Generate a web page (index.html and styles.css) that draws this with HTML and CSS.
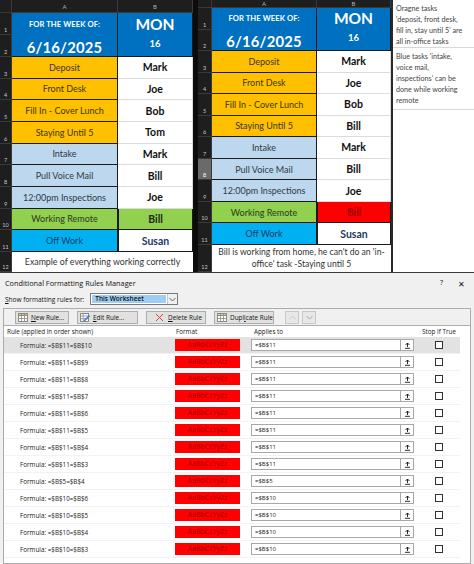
FILE: index.html
```
<!DOCTYPE html>
<html>
<head>
<meta charset="utf-8">
<link rel="stylesheet" href="styles.css">
</head>
<body>
<div class="top">
  <div class="sheet s1">
    <div class="ch corner"></div><div class="ch">A</div><div class="ch">B</div>
    <div class="rn">1</div>
    <div class="blueA"><div class="week">FOR THE WEEK OF:</div><div class="date">6/16/2025</div></div>
    <div class="blueB"><div class="mon">MON</div><div class="day">16</div></div>
    <div class="rn">2</div>
    <div class="rn">3</div><div class="c or">Deposit</div><div class="n">Mark</div>
    <div class="rn">4</div><div class="c or">Front Desk</div><div class="n">Joe</div>
    <div class="rn">5</div><div class="c or">Fill In - Cover Lunch</div><div class="n">Bob</div>
    <div class="rn">6</div><div class="c or">Staying Until 5</div><div class="n">Tom</div>
    <div class="rn">7</div><div class="c lb">Intake</div><div class="n">Mark</div>
    <div class="rn">8</div><div class="c lb">Pull Voice Mail</div><div class="n">Bill</div>
    <div class="rn">9</div><div class="c lb">12:00pm Inspections</div><div class="n">Joe</div>
    <div class="rn">10</div><div class="c gr">Working Remote</div><div class="n box gr">Bill</div>
    <div class="rn">11</div><div class="c cy">Off Work</div><div class="n box cy navy">Susan</div>
    <div class="rn">12</div><div class="foot">Example of everything working correctly</div>
  </div>
  <div class="gap"></div>
  <div class="sheet s2">
    <div class="ch corner"></div><div class="ch">A</div><div class="ch">B</div>
    <div class="rn">1</div>
    <div class="blueA"><div class="week">FOR THE WEEK OF:</div><div class="date">6/16/2025</div></div>
    <div class="blueB"><div class="mon">MON</div><div class="day">16</div></div>
    <div class="rn">2</div>
    <div class="rn">3</div><div class="c or">Deposit</div><div class="n">Mark</div>
    <div class="rn">4</div><div class="c or">Front Desk</div><div class="n">Joe</div>
    <div class="rn">5</div><div class="c or">Fill In - Cover Lunch</div><div class="n">Bob</div>
    <div class="rn">6</div><div class="c or">Staying Until 5</div><div class="n">Bill</div>
    <div class="rn">7</div><div class="c lb">Intake</div><div class="n">Mark</div>
    <div class="rn sel">8</div><div class="c lb">Pull Voice Mail</div><div class="n">Bill</div>
    <div class="rn">9</div><div class="c lb">12:00pm Inspections</div><div class="n">Joe</div>
    <div class="rn">10</div><div class="c gr">Working Remote</div><div class="n box rd">Bill</div>
    <div class="rn">11</div><div class="c cy">Off Work</div><div class="n box cy navy">Susan</div>
    <div class="rn">12</div><div class="foot two">Bill is working from home, he can't do an 'in-office' task -Staying until 5</div>
  </div>
  <div class="notes">
    <div class="note n1">Oragne tasks<br>'deposit, front desk,<br>fill in, stay until 5' are<br>all in-office tasks</div>
    <div class="note n2">Blue tasks 'intake,<br>voice mail,<br>inspections' can be<br>done while working<br>remote</div>
  </div>
</div>

<div class="dialog">
  <div class="titlebar">
    <span>Conditional Formatting Rules Manager</span>
    <span class="ctrls"><span class="q">?</span><span class="x">✕</span></span>
  </div>
  <div class="showrow">
    <span><u>S</u>how formatting rules for:</span>
    <div class="combo"><span class="combosel">This Worksheet</span><span class="comboarr"><svg width="7" height="5" viewBox="0 0 7 5"><path d="M0.5 1 L3.5 4 L6.5 1" fill="none" stroke="#555" stroke-width="0.9"/></svg></span></div>
  </div>
  <div class="toolbar">
    <div class="btn b1">
      <svg width="10" height="9" viewBox="0 0 10 9"><rect x="0.5" y="0.5" width="9" height="8" fill="#fff" stroke="#8a8a8a"/><rect x="0.5" y="0.5" width="9" height="2" fill="#f2b84b" stroke="#8a8a8a"/><path d="M3.5 0.5V8.5M6.5 0.5V8.5M0.5 5.5H9.5" stroke="#8a8a8a" stroke-width="0.8"/></svg>
      <span><u>N</u>ew Rule...</span>
    </div>
    <div class="btn b2">
      <svg width="10" height="9" viewBox="0 0 10 9"><rect x="0.5" y="0.5" width="8" height="8" fill="#fff" stroke="#8a8a8a"/><path d="M0.5 3H8.5M0.5 5.7H8.5M3.2 0.5V8.5" stroke="#8a8a8a" stroke-width="0.8"/><path d="M4 8 L9.5 2.5" stroke="#3b7dd8" stroke-width="1.6"/></svg>
      <span><u>E</u>dit Rule...</span>
    </div>
    <div class="btn b3">
      <svg width="9" height="9" viewBox="0 0 9 9"><path d="M1 1L8 8M8 1L1 8" stroke="#e0393e" stroke-width="1"/></svg>
      <span><u>D</u>elete Rule</span>
    </div>
    <div class="btn b4">
      <svg width="10" height="9" viewBox="0 0 10 9"><rect x="0.5" y="0.5" width="9" height="8" fill="#fff" stroke="#8a8a8a"/><rect x="0.5" y="0.5" width="9" height="2" fill="#f2c97a" stroke="#8a8a8a"/><path d="M3.5 0.5V8.5M6.5 0.5V8.5M0.5 5.5H9.5" stroke="#8a8a8a" stroke-width="0.8"/></svg>
      <span>Dupl<u>i</u>cate Rule</span>
    </div>
    <div class="arrows">
      <div class="abtn"><svg width="7" height="5" viewBox="0 0 7 5"><path d="M0.5 4 L3.5 1 L6.5 4" fill="none" stroke="#c8c8c8" stroke-width="0.9"/></svg></div>
      <div class="abtn"><svg width="7" height="5" viewBox="0 0 7 5"><path d="M0.5 1 L3.5 4 L6.5 1" fill="none" stroke="#8aa0c0" stroke-width="0.9"/></svg></div>
    </div>
  </div>
  <div class="list">
    <div class="lrow lhead">
      <div class="rule">Rule (applied in order shown)</div>
      <div class="fmt">Format</div>
      <div class="sp"></div>
      <div class="app">Applies to</div>
      <div class="stop">Stop If True</div>
    </div>
    <div class="lrow selrow"><div class="rule">Formula: =$B$11=$B$10</div><div class="fmtbox">AaBbCcYyZz</div><div class="sp"></div><div class="inp">=$B$11</div><div class="ib"><svg width="7" height="7" viewBox="0 0 7 7"><path d="M3.5 1V5M1.5 3L3.5 1L5.5 3M1 6.3H6" fill="none" stroke="#111" stroke-width="0.9"/></svg></div><div class="stopc"><span class="chk"></span></div></div>
    <div class="lrow"><div class="rule">Formula: =$B$11=$B$9</div><div class="fmtbox">AaBbCcYyZz</div><div class="sp"></div><div class="inp">=$B$11</div><div class="ib"><svg width="7" height="7" viewBox="0 0 7 7"><path d="M3.5 1V5M1.5 3L3.5 1L5.5 3M1 6.3H6" fill="none" stroke="#111" stroke-width="0.9"/></svg></div><div class="stopc"><span class="chk"></span></div></div>
    <div class="lrow"><div class="rule">Formula: =$B$11=$B$8</div><div class="fmtbox">AaBbCcYyZz</div><div class="sp"></div><div class="inp">=$B$11</div><div class="ib"><svg width="7" height="7" viewBox="0 0 7 7"><path d="M3.5 1V5M1.5 3L3.5 1L5.5 3M1 6.3H6" fill="none" stroke="#111" stroke-width="0.9"/></svg></div><div class="stopc"><span class="chk"></span></div></div>
    <div class="lrow"><div class="rule">Formula: =$B$11=$B$7</div><div class="fmtbox">AaBbCcYyZz</div><div class="sp"></div><div class="inp">=$B$11</div><div class="ib"><svg width="7" height="7" viewBox="0 0 7 7"><path d="M3.5 1V5M1.5 3L3.5 1L5.5 3M1 6.3H6" fill="none" stroke="#111" stroke-width="0.9"/></svg></div><div class="stopc"><span class="chk"></span></div></div>
    <div class="lrow"><div class="rule">Formula: =$B$11=$B$6</div><div class="fmtbox">AaBbCcYyZz</div><div class="sp"></div><div class="inp">=$B$11</div><div class="ib"><svg width="7" height="7" viewBox="0 0 7 7"><path d="M3.5 1V5M1.5 3L3.5 1L5.5 3M1 6.3H6" fill="none" stroke="#111" stroke-width="0.9"/></svg></div><div class="stopc"><span class="chk"></span></div></div>
    <div class="lrow"><div class="rule">Formula: =$B$11=$B$5</div><div class="fmtbox">AaBbCcYyZz</div><div class="sp"></div><div class="inp">=$B$11</div><div class="ib"><svg width="7" height="7" viewBox="0 0 7 7"><path d="M3.5 1V5M1.5 3L3.5 1L5.5 3M1 6.3H6" fill="none" stroke="#111" stroke-width="0.9"/></svg></div><div class="stopc"><span class="chk"></span></div></div>
    <div class="lrow"><div class="rule">Formula: =$B$11=$B$4</div><div class="fmtbox">AaBbCcYyZz</div><div class="sp"></div><div class="inp">=$B$11</div><div class="ib"><svg width="7" height="7" viewBox="0 0 7 7"><path d="M3.5 1V5M1.5 3L3.5 1L5.5 3M1 6.3H6" fill="none" stroke="#111" stroke-width="0.9"/></svg></div><div class="stopc"><span class="chk"></span></div></div>
    <div class="lrow"><div class="rule">Formula: =$B$11=$B$3</div><div class="fmtbox">AaBbCcYyZz</div><div class="sp"></div><div class="inp">=$B$11</div><div class="ib"><svg width="7" height="7" viewBox="0 0 7 7"><path d="M3.5 1V5M1.5 3L3.5 1L5.5 3M1 6.3H6" fill="none" stroke="#111" stroke-width="0.9"/></svg></div><div class="stopc"><span class="chk"></span></div></div>
    <div class="lrow"><div class="rule">Formula: =$B$5=$B$4</div><div class="fmtbox">AaBbCcYyZz</div><div class="sp"></div><div class="inp">=$B$5</div><div class="ib"><svg width="7" height="7" viewBox="0 0 7 7"><path d="M3.5 1V5M1.5 3L3.5 1L5.5 3M1 6.3H6" fill="none" stroke="#111" stroke-width="0.9"/></svg></div><div class="stopc"><span class="chk"></span></div></div>
    <div class="lrow"><div class="rule">Formula: =$B$10=$B$6</div><div class="fmtbox">AaBbCcYyZz</div><div class="sp"></div><div class="inp">=$B$10</div><div class="ib"><svg width="7" height="7" viewBox="0 0 7 7"><path d="M3.5 1V5M1.5 3L3.5 1L5.5 3M1 6.3H6" fill="none" stroke="#111" stroke-width="0.9"/></svg></div><div class="stopc"><span class="chk"></span></div></div>
    <div class="lrow"><div class="rule">Formula: =$B$10=$B$5</div><div class="fmtbox">AaBbCcYyZz</div><div class="sp"></div><div class="inp">=$B$10</div><div class="ib"><svg width="7" height="7" viewBox="0 0 7 7"><path d="M3.5 1V5M1.5 3L3.5 1L5.5 3M1 6.3H6" fill="none" stroke="#111" stroke-width="0.9"/></svg></div><div class="stopc"><span class="chk"></span></div></div>
    <div class="lrow"><div class="rule">Formula: =$B$10=$B$4</div><div class="fmtbox">AaBbCcYyZz</div><div class="sp"></div><div class="inp">=$B$10</div><div class="ib"><svg width="7" height="7" viewBox="0 0 7 7"><path d="M3.5 1V5M1.5 3L3.5 1L5.5 3M1 6.3H6" fill="none" stroke="#111" stroke-width="0.9"/></svg></div><div class="stopc"><span class="chk"></span></div></div>
    <div class="lrow"><div class="rule">Formula: =$B$10=$B$3</div><div class="fmtbox">AaBbCcYyZz</div><div class="sp"></div><div class="inp">=$B$10</div><div class="ib"><svg width="7" height="7" viewBox="0 0 7 7"><path d="M3.5 1V5M1.5 3L3.5 1L5.5 3M1 6.3H6" fill="none" stroke="#111" stroke-width="0.9"/></svg></div><div class="stopc"><span class="chk"></span></div></div>
  </div>
</div>
</body>
</html>
```
FILE: styles.css
```
* { box-sizing: border-box; margin: 0; padding: 0; }
body {
  width: 474px; height: 564px; overflow: hidden;
  background: #f0f0f0;
  font-family: Lato, "Liberation Sans", sans-serif;
}
.top { display: flex; height: 272px; background: #0c0c0c; }
.sheet { display: grid; width: 193px; height: 272px; background: #1e1e1e; }
.s1 { grid-template-columns: 12px 106px 75px; grid-template-rows: 13px 22px 22px repeat(9, 21.67px) 20px; }
.s2 { grid-template-columns: 14px 105px 74px; grid-template-rows: 8px 21.5px 21.5px repeat(9, 21.56px) 27px; }
.gap { width: 5px; background: #0c0c0c; }

.ch { background: #1e1e1e; color: #b0b0b0; font-size: 6px; text-align: center; line-height: 13px; border-right: 1px solid #3a3a3a; border-bottom: 1px solid #3a3a3a; }
.s2 .ch { line-height: 7px; }
.rn { background: #1e1e1e; color: #c8c8c8; font-size: 5.5px; display: flex; align-items: flex-end; justify-content: center; padding-bottom: 1px; border-bottom: 1px solid #3a3a3a; border-right: 1px solid #3a3a3a; }
.rn.sel { background: #6a6a6a; color: #fff; }
.blueA, .blueB { grid-row: span 2; background: #0070c0; color: #fff; font-weight: 700; display: flex; flex-direction: column; align-items: center; border-bottom: 1px solid #1a1a1a; border-right: 1px solid #1a1a1a; line-height: 1; }
.week { font-size: 7.6px; margin-top: 8px; letter-spacing: 0.1px; }
.date { font-size: 14.8px; margin-top: 11px; letter-spacing: 0.2px; }
.mon { font-size: 15.5px; margin-top: 4px; }
.day { font-size: 9.5px; margin-top: 6.5px; }
.s2 .week { margin-top: 7px; }
.s2 .date { margin-top: 11px; }
.s2 .mon { margin-top: 3px; }
.s2 .day { margin-top: 6.5px; }

.c { display: flex; align-items: center; justify-content: center; font-size: 9px; color: #333; border-bottom: 1px solid #1a1a1a; border-right: 1px solid #1a1a1a; }
.or { background: #ffc000; color: #3d3420; }
.lb { background: #bdd7ee; color: #2f3a45; }
.gr { background: #92d050; color: #2a3a1a; }
.cy { background: #00b0f0; color: #1d3a66; }
.n { display: flex; align-items: center; justify-content: center; background: #fff; color: #111; font-weight: 700; font-size: 10.5px; border-bottom: 1px solid #dcdcdc; border-right: 1px solid #dcdcdc; }
.n.box { border: 1px solid #1a1a1a; border-top: none; }
.n.gr { background: #92d050; color: #1e2a10; }
.n.rd { background: #ff0000; color: #a00000; }
.n.navy { color: #1d3a66; }
.foot { grid-column: span 2; background: #fff; color: #333; font-size: 8.8px; display: flex; align-items: center; justify-content: center; text-align: center; }
.foot.two { line-height: 12px; padding: 0 2px; align-items: flex-start; padding-top: 1px; font-size: 8.6px; }

.notes { width: 83px; background: #fff; border-left: 2px solid #2a2a2a; }
.note { font-size: 7.2px; line-height: 11px; color: #444; padding: 3px 0 4px 3px; border-bottom: 1px solid #d8d8d8; white-space: nowrap; overflow: hidden; }
.n1 { height: 48px; }
.n2 { height: 62px; }

.dialog { height: 292px; background: #f0f0f0; border-top: 1px solid #3a3a3a; font-family: "Open Sans", "Liberation Sans", sans-serif; color: #111; font-size: 6.3px; }
.titlebar { display: flex; justify-content: space-between; align-items: center; height: 20px; padding: 0 9px 0 5px; font-size: 7.3px; }
.ctrls { display: flex; gap: 15px; font-size: 7px; }
.ctrls .x { font-size: 8px; }
.showrow { display: flex; align-items: center; gap: 6px; height: 12px; padding-left: 5px; font-size: 6.5px; white-space: nowrap; }
.combo { display: flex; height: 12px; width: 88px; border: 1px solid #7a7a7a; background: #fff; }
.combosel { flex: 1; background: #9fcdf3; margin: 1px; font-weight: 600; line-height: 8px; padding-left: 3px; font-size: 6.5px; color: #111; }
.comboarr { width: 10px; display: flex; align-items: center; justify-content: center; border-left: 1px solid #c8c8c8; background: #f0f0f0; }
.toolbar { display: flex; align-items: center; height: 17px; margin: 3px 3px 0 3px; padding-left: 11px; border: 1px solid #adadad; border-bottom: none; gap: 8px; }
.btn { display: flex; align-items: center; gap: 3px; height: 13px; border: 1px solid #adadad; background: #e1e1e1; padding: 0 0 0 2px; font-size: 6.4px; white-space: nowrap; }
.b1 { width: 54px; }
.b2 { width: 61px; }
.b3 { width: 60px; padding-left: 8px; gap: 4px; }
.b4 { width: 60px; }
.arrows { display: flex; gap: 3px; margin-left: 3px; }
.abtn { width: 14px; height: 13px; border: 1px solid #c8c8c8; background: #e8e8e8; display: flex; align-items: center; justify-content: center; }

.list { margin: 0 3px; height: 239px; background: #fff; border: 1px solid #adadad; }
.lrow { display: grid; grid-template-columns: 171px 65px 11px 150px 13px 50px; height: 17px; align-items: center; width: 456px; border-bottom: 1px solid #f2f2f2; white-space: nowrap; }
.lhead { height: 11px; border-bottom: none; color: #222; }
.lhead .rule { padding-left: 3px; }
.lhead .fmt { padding-left: 1px; }
.lhead .app { padding-left: 3px; grid-column: span 2; }
.lhead .stop { text-align: center; }
.selrow { background: #e2e2e2; }
.rule { padding-left: 16px; color: #222; }
.fmtbox { height: 12px; background: #ff0000; color: #a00000; text-align: center; line-height: 12px; font-size: 7px; }
.inp { height: 12px; background: #fff; border: 1px solid #a8a8a8; line-height: 10px; padding-left: 3px; color: #222; font-size: 6px; }
.ib { height: 12px; border: 1px solid #a8a8a8; border-left: none; background: #fff; display: flex; align-items: center; justify-content: center; }
.stopc { display: flex; justify-content: center; }
.chk { width: 8px; height: 8px; border: 1px solid #333; background: #fff; }
```
